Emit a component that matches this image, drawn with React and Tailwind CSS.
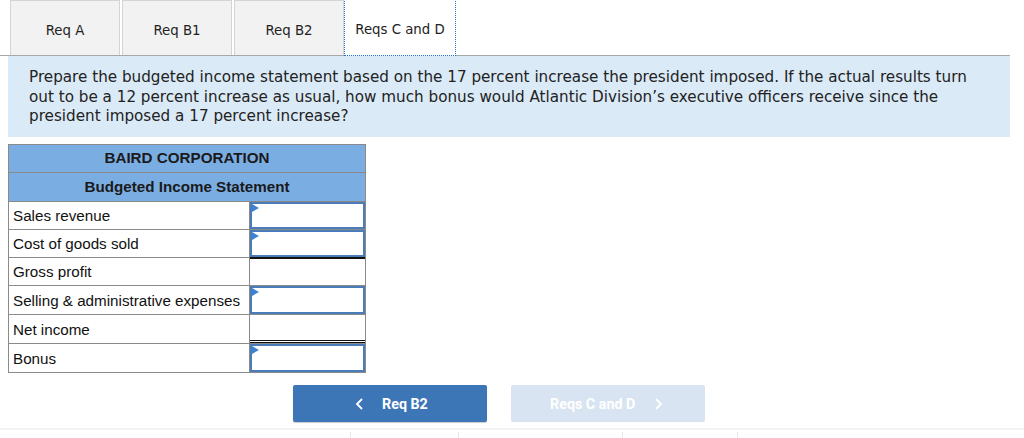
import React from "react";

const tabFont = { fontFamily: '"DejaVu Sans", Verdana, sans-serif' };

function Tab({ label, active }) {
  if (active) {
    return (
      <div className="w-[112px] h-[57px] -mb-[1px] bg-white border border-dotted border-[#1f6fd6] [border-top-style:solid] border-t-[#a8a8a8] flex items-center justify-center pt-[5px] text-[13.3px] text-[#222] relative z-10">
        {label}
      </div>
    );
  }
  return (
    <div className="w-[110px] h-[55px] bg-[#f2f2f2] border border-[#d4d4d4] border-b-0 flex items-center justify-center pt-[6px] text-[13.3px] text-[#222]">
      {label}
    </div>
  );
}

function InputCell() {
  return (
    <div className="relative h-full bg-white border-2 border-[#4a7cba]">
      <svg className="absolute left-0 top-0" width="7" height="8" viewBox="0 0 7 8">
        <polygon points="0,0 7,4 0,8" fill="#3d82d4" />
      </svg>
    </div>
  );
}

const rows = [
  { label: "Sales revenue", type: "input", h: "h-[28px]" },
  { label: "Cost of goods sold", type: "input", h: "h-[28px]" },
  { label: "Gross profit", type: "plain-top", h: "h-[28px]" },
  { label: "Selling & administrative expenses", type: "input", h: "h-[29px]" },
  { label: "Net income", type: "plain-double", h: "h-[29px]" },
  { label: "Bonus", type: "input", h: "h-[28px]" },
];

export default function App() {
  return (
    <div className="w-[1024px] h-[438px] bg-white overflow-hidden relative">
      {/* Tabs */}
      <div style={tabFont} className="pl-[10px] flex items-end gap-[2px] h-[56px] border-b border-[#a8a8a8] mr-[14px]">
        <Tab label="Req A" />
        <Tab label="Req B1" />
        <Tab label="Req B2" />
        <div className="-ml-[2px]">
          <Tab label="Reqs C and D" active />
        </div>
      </div>

      {/* Question */}
      <div style={tabFont} className="ml-[8px] w-[1002px] bg-[#dbeaf7] pt-[12px] pb-[10px] pl-[21px] text-[15.2px] leading-[19.5px] text-[#222]">
        <div className="whitespace-nowrap">Prepare the budgeted income statement based on the 17 percent increase the president imposed. If the actual results turn</div>
        <div className="whitespace-nowrap">out to be a 12 percent increase as usual, how much bonus would Atlantic Division’s executive officers receive since the</div>
        <div className="whitespace-nowrap">president imposed a 17 percent increase?</div>
      </div>

      {/* Table */}
      <div
        style={{ fontFamily: '"Liberation Sans", Arial, sans-serif' }}
        className="ml-[8px] mt-[7px] w-[358px] border border-[#8a8a8a] text-[15.2px] text-[#111]"
      >
        <div className="h-[28px] bg-[#7aaee3] border-b border-[#8a8a8a] flex items-center justify-center font-bold text-[#1a1a1a]">
          BAIRD CORPORATION
        </div>
        <div className="h-[29px] bg-[#7aaee3] border-b border-[#8a8a8a] flex items-center justify-center pt-[1px] font-bold text-[#1a1a1a]">
          Budgeted Income Statement
        </div>
        {rows.map((r, i) => (
          <div
            key={r.label}
            className={`flex ${r.h} ${i < rows.length - 1 ? "border-b border-[#8a8a8a]" : ""}`}
          >
            <div className="w-[241px] border-r border-[#8a8a8a] flex items-center pl-[4px] pt-[3px]">
              {r.label}
            </div>
            <div className="flex-1">
              {r.type === "input" && <InputCell />}
              {r.type === "plain-top" && (
                <div className="h-full border-t-2 border-[#111] -mt-[1px]"></div>
              )}
              {r.type === "plain-double" && (
                <div className="h-full border-b-[3px] border-double border-[#111]"></div>
              )}
            </div>
          </div>
        ))}
      </div>

      {/* Nav buttons */}
      <div
        style={{ fontFamily: 'Roboto, "Open Sans", sans-serif' }}
        className="flex gap-[24px] ml-[293px] mt-[12px]"
      >
        <div className="w-[194px] h-[37px] rounded-[2px] bg-[#3c76b6] shadow-[0_1px_1px_rgba(0,0,0,0.2)] flex items-center pt-[3px] text-white font-bold text-[14.3px]">
          <svg className="ml-[62px] -mt-[2px]" width="10" height="14" viewBox="0 0 10 14">
            <polyline points="7,2 2,7 7,12" fill="none" stroke="white" strokeWidth="1.8" />
          </svg>
          <span className="ml-[17px]">Req B2</span>
        </div>
        <div className="w-[194px] h-[37px] rounded-[2px] bg-[#d8e4f1] flex items-center pt-[3px] text-white font-bold text-[14.3px]">
          <span className="ml-[39px]">Reqs C and D</span>
          <svg className="ml-[18px] -mt-[2px]" width="10" height="14" viewBox="0 0 10 14">
            <polyline points="3,2 8,7 3,12" fill="none" stroke="white" strokeWidth="1.8" />
          </svg>
        </div>
      </div>

      {/* Footer line */}
      <div className="mt-[6px] h-[2px] bg-[#f2f2f2]"></div>
      <div className="flex h-[8px] mt-[2px]">
        <div className="w-[350px]"></div>
        <div className="w-[108px] border-l border-[#e6e6e6]"></div>
        <div className="w-[164px] border-l border-[#e6e6e6]"></div>
        <div className="w-[115px] border-l border-[#e6e6e6]"></div>
        <div className="flex-1 border-l border-[#e6e6e6]"></div>
      </div>
    </div>
  );
}
